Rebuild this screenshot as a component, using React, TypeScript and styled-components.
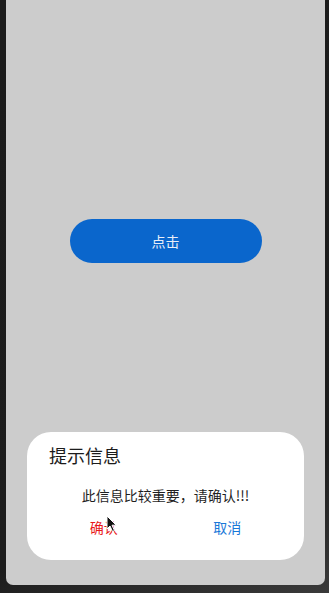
import React from "react";
import styled, { createGlobalStyle } from "styled-components";

const Global = createGlobalStyle`
  html, body {
    margin: 0;
    padding: 0;
    background: #1b1b1b;
    font-family: "Noto Sans CJK SC", "Noto Sans", sans-serif;
  }
  #root {
    width: 329px;
    height: 593px;
    overflow: hidden;
  }
`;

const Desk = styled.div`
  position: relative;
  width: 329px;
  height: 593px;
  box-sizing: border-box;
  padding: 0 4px 8px 6px;
  background: linear-gradient(160deg, #1b1b1b 0%, #1c1c1c 80%, #3a3a3a 100%);
`;

const Screen = styled.div`
  height: 585px;
  background: #cccccc;
  border-radius: 0 0 7px 7px;
  display: flex;
  flex-direction: column;
  align-items: center;
  padding-top: 219px;
  box-sizing: border-box;
`;

const PillButton = styled.button`
  width: 192px;
  height: 44px;
  border: none;
  border-radius: 22px;
  background: #0a66cc;
  color: #e8eef8;
  font-family: inherit;
  font-size: 14px;
  line-height: 20px;
  padding: 0;
`;

const Dialog = styled.div`
  margin-top: auto;
  margin-bottom: 25px;
  width: 277px;
  background: #ffffff;
  border-radius: 24px;
  box-sizing: border-box;
  padding: 11px 15px 13px;
  display: flex;
  flex-direction: column;
`;

const Title = styled.div`
  font-size: 18px;
  line-height: 24px;
  color: #1c1c1c;
  padding-left: 7px;
`;

const Message = styled.div`
  margin-top: 18px;
  font-size: 14px;
  line-height: 20px;
  color: #1f1f1f;
  text-align: center;
`;

const Actions = styled.div`
  margin-top: 2px;
  display: grid;
  grid-template-columns: 1fr 1fr;
`;

const ActionButton = styled.button<{ $tone: string }>`
  height: 40px;
  border: none;
  background: transparent;
  font-family: inherit;
  font-size: 14px;
  line-height: 20px;
  color: ${(p) => p.$tone};
  padding: 0;
`;

const Cursor = styled.svg`
  position: absolute;
  left: 106px;
  top: 515px;
  width: 12px;
  height: 18px;
`;

export default function App() {
  return (
    <>
      <Global />
      <Desk>
        <Screen>
          <PillButton>点击</PillButton>
          <Dialog>
            <Title>提示信息</Title>
            <Message>此信息比较重要，请确认!!!</Message>
            <Actions>
              <ActionButton $tone="#e81919">确认</ActionButton>
              <ActionButton $tone="#1a78d8">取消</ActionButton>
            </Actions>
          </Dialog>
        </Screen>
        <Cursor viewBox="0 0 12 18">
          <path
            d="M1 1 L1 14 L4 11 L6.5 16.5 L8.5 15.6 L6 10.2 L10.2 10.2 Z"
            fill="#111"
            stroke="#fff"
            strokeWidth="1"
            strokeLinejoin="round"
          />
        </Cursor>
      </Desk>
    </>
  );
}
